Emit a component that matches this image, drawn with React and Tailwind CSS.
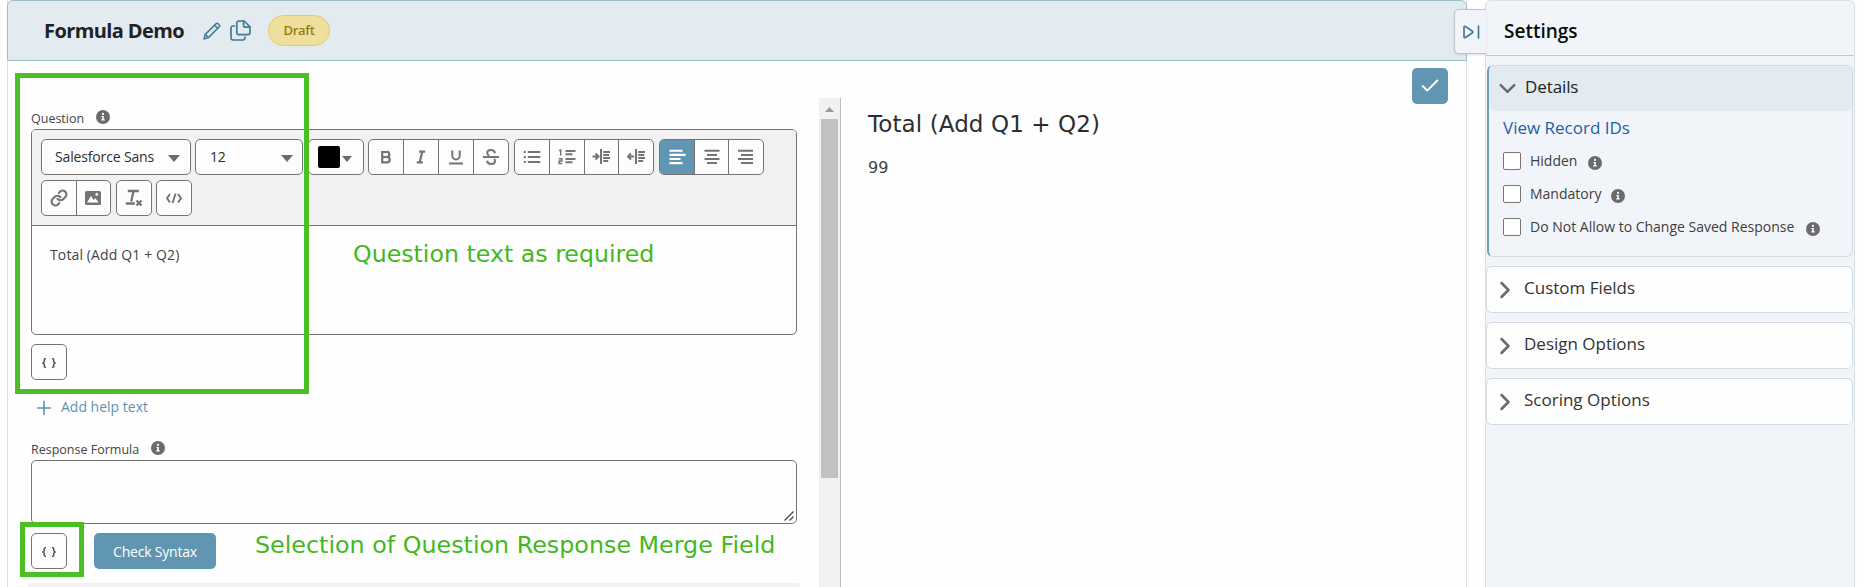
import { Check, ChevronDown, ChevronRight, Link, Plus } from 'lucide-react';

const InfoIcon = ({ className = "" }) => (
    <svg viewBox="0 0 14 14" className={`w-[14px] h-[14px] shrink-0 ${className}`}>
        <circle cx="7" cy="7" r="7" fill="#6b6b6b" />
        <circle cx="7" cy="3.9" r="1.1" fill="#fff" />
        <path d="M5.4 5.9h2.4v3.4h1v1.2H5.2V9.3h1V7.1h-.8z" fill="#fff" />
    </svg>
);

const PencilIcon = () => (
    <svg viewBox="0 0 18 18" className="w-[18px] h-[18px]" fill="none" stroke="#427d93" strokeWidth="1.5" strokeLinejoin="round" strokeLinecap="round">
        <path d="M1 17l1.2-4.6L13.2 1.6c.5-.5 1.2-.5 1.7 0l1.4 1.4c.5.5.5 1.2 0 1.7L5.4 15.6z" />
        <path d="M11.6 3.3l3 3M2.4 12.6l2.8 2.8" />
    </svg>
);

const CopyIcon = () => (
    <svg viewBox="0 0 21 21" className="w-[21px] h-[21px]" fill="none" stroke="#427d93" strokeWidth="1.7" strokeLinejoin="round" strokeLinecap="round">
        <path d="M14.2 1H9C7.6 1 6.8 1.8 6.8 3.1v9.3c0 1.4.8 2.2 2.2 2.2h8.8c1.4 0 2.2-.8 2.2-2.2V6.8z" />
        <path d="M13.6 1.2v4c0 1.3.7 2 2 2h4" />
        <path d="M4.6 6H3.2C1.8 6 1 6.8 1 8.2v9.6C1 19.2 1.8 20 3.2 20h9.6c1.4 0 2.2-.8 2.2-2.2v-.6" />
    </svg>
);

const Caret = ({ className }) => (
    <svg viewBox="0 0 12 8" className={className} fill="#6b6b6b" preserveAspectRatio="none">
        <path d="M0 0h12L6 8z" />
    </svg>
);

// 18x18 toolbar glyphs, drawn in the current text colour
const glyphs = {
    bold: <path d="M5.2 4v10.4h4.6a2.7 2.7 0 0 0 .4-5.4 2.5 2.5 0 0 0-.8-5zM5.2 9h5" strokeWidth="2.2" />,
    italic: <path d="M7.2 3.7h6M4.8 14.3h6M10.3 3.7L7.7 14.3" strokeWidth="2.2" />,
    underline: <path d="M5.3 2.5v5.2a3.7 3.7 0 0 0 7.4 0V2.5M2 15.5h14" strokeWidth="2" />,
    strike: <path d="M1 9h16M13 5.2C12.6 3 11 2 9 2 6.7 2 5.2 3.2 5.2 5c0 1.3.9 2.2 2 2.6M5 12.8C5.4 15 7 16 9 16c2.5 0 4-1.3 4-3.2 0-.8-.3-1.4-.7-1.9" strokeWidth="2" />,
    bullets: <path d="M.8 4h2M.8 9h2M.8 14h2M4.8 4h12.500M4.800 9h12.500M4.800 14h12.500" strokeWidth="1.9" />,
    numbers: (
        <>
            <path d="M7.500 3h10M7.500 6.200h7M7.500 11h10M7.500 14.200h7" strokeWidth="2" />
            <path d="M1 2.600L2.700 2v5.600M.8 10.700h3v2.400H1.200v2.400h3" strokeWidth="1.5" />
        </>
    ),
    indent: <path d="M.5 8.500h5M3.500 5.500l3 3-3 3M9 1v15M11.200 4H18M11.200 7h6M11.200 10H18M11.200 13h5" strokeWidth="2" />,
    outdent: <path d="M1.500 8.500h5.500M4 5.500l-3 3 3 3M9 1v15M11.200 4H18M11.200 7h6M11.200 10H18M11.200 13h5" strokeWidth="2" />,
    left: <path d="M1.500 2.800h13M1.500 6.900h16M1.500 11h11M1.500 15.100h13" strokeWidth="2.1" />,
    center: <path d="M1.500 2.800h15M4 6.900h10M1.500 11h15M4 15.100h10" strokeWidth="2" />,
    right: <path d="M1 2.800h15M4 6.900h12M1 11h15M4 15.100h12" strokeWidth="2" />,
    image: (
        <>
            <rect x="1" y="2" width="16" height="14" rx="1.5" fill="currentColor" stroke="none" />
            <path d="M3 13.5l4-6.500 2.600 4 1.600-2 3.400 4.500z" fill="#fff" stroke="none" />
            <circle cx="12.8" cy="5.4" r="1.4" fill="#fff" stroke="none" />
        </>
    ),
    clear: <path d="M2.800 2h11M8.600 2L6.200 12.500M.8 14.500h9M11.500 11.500l5 5M16.500 11.500l-5 5" strokeWidth="2.3" />,
    code: <path d="M5 5L2 9.200 5 13.400M13 5l3 4.200-3 4.200M10.600 4.500L7.600 14" strokeWidth="1.9" />
};

const Glyph = ({ name }) => (
    <svg viewBox="0 0 18 18" className="w-[18px] h-[18px]" fill="none" stroke="currentColor">
        {glyphs[name]}
    </svg>
);

const ButtonGroup = ({ names, active, className = "" }) => (
    <div className={`flex h-9 border border-[#747474] rounded-[5px] overflow-hidden bg-[#fdfdfd] text-[#747474] ${className}`}>
        {names.map((name, i) => (
            <button
                key={name}
                className={`flex-1 flex items-center justify-center
                ${i > 0 ? "border-l border-[#747474]" : ""}
                ${name === active ? "bg-[#6096b2] text-white" : ""}`}
            >
                {name === "link" ? <Link className="w-[18px] h-[18px]" strokeWidth={2.8} /> : <Glyph name={name} />}
            </button>
        ))}
    </div>
);

const MergeButton = () => (
    <button className="w-9 h-9 shrink-0 rounded-[5px] border border-[#747474] flex items-center justify-center text-[#555]">
        <svg viewBox="0 0 14 10" className="w-[14px] h-[10px] mt-[2px]" fill="none" stroke="currentColor" strokeWidth="1.5">
            <path d="M4 .8H3.200c-.6 0-.9.300-.9.900v2L.9 5l1.400 1.300v2c0 .6.300.9.900.9H4M10 .8h.8c.6 0 .9.300.9.900v2L13.100 5l-1.400 1.300v2c0 .6-.300.9-.9.900H10" />
        </svg>
    </button>
);

const options = [
    { label: "Hidden", gap: "ml-[11px]", shift: "mt-[4px]" },
    { label: "Mandatory", gap: "ml-[10px]", shift: "mt-[4px]" },
    { label: "Do Not Allow to Change Saved Response", gap: "ml-[12px]", shift: "mt-[3px]" }
];

const sections = ["Custom Fields", "Design Options", "Scoring Options"];

export default function App() {
    return (
        <div className="relative w-[1863px] h-[587px] overflow-hidden bg-[#fefefe] pl-[7px] flex gap-[18px] font-['Open_Sans',sans-serif] text-[#2e2e2e]">
            {/* MAIN */}
            <main className="w-[1460px] h-full flex flex-col border-x border-[#dde3e8]">
                <header className="-mx-px h-[61px] shrink-0 flex items-center pl-[36px] bg-[#e3eaf0] border border-[#9abfcb] rounded-t-[6px]">
                    <h1 className="w-[141px] mt-px whitespace-nowrap text-[20px] font-bold tracking-[-0.600px] text-[#1f2326]">Formula Demo</h1>
                    <div className="flex items-center ml-[18px] gap-[9px]">
                        <PencilIcon />
                        <CopyIcon />
                    </div>
                    <span className="ml-[17px] w-[62px] h-[31px] flex items-center justify-center rounded-full border border-[#e9cb62] bg-[#efdf9c] pt-px text-[13px] font-semibold tracking-[-0.300px] text-[#937c10]">
                        Draft
                    </span>
                </header>

                <div className="flex flex-1 min-h-0">
                    {/* EDITOR */}
                    <section className="w-[833px] flex pt-[37px]">
                        <div className="flex-1 pl-[23px] pr-[22px] overflow-hidden">
                            <div className="mt-[11px] h-5 flex items-center text-[12.500px] text-[#444]">
                                Question <InfoIcon className="ml-3 -mt-[5px]" />
                            </div>

                            <div className="h-[206px] rounded-[5px] border border-[#747474] overflow-hidden">
                                <div className="h-[96px] bg-[#f1f1f1] border-b border-[#747474] pl-[9px] pt-[9px]">
                                    <div className="flex">
                                        <div className="w-[150px] h-9 flex items-center justify-between pl-[13px] pr-[10px] rounded-[5px] border border-[#747474] bg-[#fdfdfd] text-[14px] tracking-[-0.150px]">
                                            <span className="-mt-px whitespace-nowrap">Salesforce Sans</span>
                                            <Caret className="w-3 h-[7px] mt-[3px]" />
                                        </div>
                                        <div className="ml-1 w-[108px] h-9 flex items-center justify-between pl-[14px] pr-[9px] rounded-[5px] border border-[#747474] bg-[#fdfdfd] text-[14px] tracking-[-0.300px]">
                                            <span className="-mt-px">12</span>
                                            <Caret className="w-3 h-[7px] mt-[3px]" />
                                        </div>
                                        <div className="ml-[5px] w-[56px] h-9 flex items-center pl-[9px] rounded-[5px] border border-[#747474] bg-[#fdfdfd]">
                                            <span className="w-[22px] h-[22px] rounded-[2px] bg-black" />
                                            <Caret className="w-[10px] h-[6px] ml-[2px] mt-[3px]" />
                                        </div>
                                        <ButtonGroup className="ml-1 w-[141px]" names={["bold", "italic", "underline", "strike"]} />
                                        <ButtonGroup className="ml-[5px] w-[140px]" names={["bullets", "numbers", "indent", "outdent"]} />
                                        <ButtonGroup className="ml-[5px] w-[105px]" names={["left", "center", "right"]} active="left" />
                                    </div>
                                    <div className="flex mt-[5px]">
                                        <ButtonGroup className="w-[70px]" names={["link", "image"]} />
                                        <ButtonGroup className="ml-[5px] w-9" names={["clear"]} />
                                        <ButtonGroup className="ml-1 w-9" names={["code"]} />
                                    </div>
                                </div>
                                <p className="pl-[18px] pt-[19px] text-[14px] leading-5 tracking-[0.130px] text-[#444]">Total (Add Q1 + Q2)</p>
                            </div>

                            <div className="mt-[9px]">
                                <MergeButton />
                            </div>

                            <button className="mt-[16px] ml-[2px] h-5 flex items-center text-[14px] text-[#5c93b3]">
                                <Plus className="w-[22px] h-[22px] mt-[3px] mr-[6px]" strokeWidth={1.8} />
                                Add help text
                            </button>

                            <div className="mt-[24px] h-5 flex items-center text-[12.500px] text-[#444]">
                                Response Formula <InfoIcon className="ml-[12px] -mt-[4px]" />
                            </div>
                            <div className="h-[64px] rounded-[5px] border border-[#747474] flex items-end justify-end p-[2px]">
                                <svg viewBox="0 0 10 10" className="w-[10px] h-[10px]" stroke="#444" strokeWidth="1.3">
                                    <path d="M.5 9.500l9-9M5.500 9.500l4-4" />
                                </svg>
                            </div>

                            <div className="mt-[9px] flex">
                                <MergeButton />
                                <button className="ml-[27px] w-[122px] h-9 rounded-[5px] bg-[#6096b2] text-white text-[14px] font-medium tracking-[-0.200px]">
                                    Check Syntax
                                </button>
                            </div>
                            <div className="mt-[14px] h-3 -mx-[3px] rounded-t bg-[#f1f1f1]" />
                        </div>

                        {/* Scrollbar */}
                        <div className="w-[22px] flex flex-col items-center bg-[#f1f1f1] border-r border-[#bcbcbc]">
                            <svg viewBox="0 0 9 5" className="w-[9px] h-[5px] mt-[9px]" fill="#999">
                                <path d="M0 5h9L4.500 0z" />
                            </svg>
                            <div className="mt-[7px] w-[17px] h-[359px] bg-[#c1c1c1]" />
                        </div>
                    </section>

                    {/* PREVIEW */}
                    <section className="flex-1 flex justify-between pl-[27px] pr-[18px] font-['DejaVu_Sans',sans-serif]">
                        <div>
                            <h2 className="mt-[47px] text-[23px] leading-8 tracking-[0.100px] text-[#2e2e2e]">Total (Add Q1 + Q2)</h2>
                            <p className="mt-[18px] text-[16px] leading-5 text-[#444]">99</p>
                        </div>
                        <button className="mt-[7px] w-9 h-9 rounded-[5px] bg-[#6096b2] flex items-center justify-center text-white">
                            <Check className="w-[22px] h-[22px]" strokeWidth={2.1} />
                        </button>
                    </section>
                </div>
            </main>

            {/* SETTINGS */}
            <aside className="w-[370px] h-full bg-[#f1f5f9] border border-b-0 border-[#d9e0e6] rounded-t-[6px]">
                <h2 className="h-[55px] flex items-center pl-[18px] pt-[6px] border-b border-[#bfc6cf] text-[19px] font-semibold text-[#0c0c0c]">
                    Settings
                </h2>
                <div className="pr-[1px] pt-[9px] flex flex-col gap-[9px]">
                    <div className="ml-px h-[192px] rounded-[6px] border border-[#d3dce3] border-l-2 border-l-[#6d9fb8] overflow-hidden">
                        <div className="h-[45px] flex items-center pl-[5px] bg-[#e3eaf0] rounded-b-[5px]">
                            <ChevronDown className="w-[27px] h-[27px] text-[#6b6b6b]" strokeWidth={2.2} />
                            <span className="ml-[4px] -mt-[3px] text-[17px] tracking-[-0.100px] text-[#222]">Details</span>
                        </div>
                        <div className="pl-[14px]">
                            <a className="mt-[5px] h-6 flex items-center text-[17px] text-[#1b62a8]">View Record IDs</a>
                            <div className="mt-[10px] flex flex-col gap-[11px]">
                                {options.map((o) => (
                                    <label key={o.label} className="h-[22px] flex items-center text-[14px] text-[#3e3e3e]">
                                        <span className="w-[18px] h-[18px] shrink-0 rounded-[2px] border border-[#747474] bg-white" />
                                        <span className="ml-[9px] -mt-px whitespace-nowrap">{o.label}</span>
                                        <InfoIcon className={`${o.gap} ${o.shift}`} />
                                    </label>
                                ))}
                            </div>
                        </div>
                    </div>
                    {sections.map((title) => (
                        <div key={title} className="h-[47px] flex items-center pl-[4px] rounded-[6px] border border-[#d3dce3] bg-[#fefefe]">
                            <ChevronRight className="w-[28px] h-[28px] text-[#6b6b6b]" strokeWidth={2.2} />
                            <span className="ml-[5px] -mt-[3px] text-[17px] text-[#333]">{title}</span>
                        </div>
                    ))}
                </div>
            </aside>

            {/* Collapse tab over the panel edge */}
            <button className="absolute left-[1454px] top-[9px] w-[32px] h-[45px] rounded-l-[5px] border border-r-0 border-[#bcc5cf] bg-[#f1f5f9] shadow-sm flex items-center justify-center">
                <svg viewBox="0 0 17 14" className="w-[17px] h-[14px] mt-[1px] ml-[2px]" fill="none" stroke="#427d93" strokeWidth="1.7" strokeLinejoin="round" strokeLinecap="round">
                    <path d="M1 2.200v9.600c0 .8.8 1.200 1.500.7l7-4.700c.6-.4.6-1.200 0-1.600l-7-4.700C1.800 1 1 1.400 1 2.200zM15.500 1v12" />
                </svg>
            </button>

            {/* Callouts */}
            <div className="absolute left-[15px] top-[73px] w-[294px] h-[321px] border-[5px] border-[#4bbf26]" />
            <div className="absolute left-[20px] top-[522px] w-[64px] h-[55px] border-[5px] border-[#4bbf26]" />
            <p className="absolute left-[353px] top-[238px] whitespace-nowrap leading-8 text-[23.700px] font-['DejaVu_Sans',sans-serif] text-[#44b81f]">
                Question text as required
            </p>
            <p className="absolute left-[255px] top-[529px] whitespace-nowrap leading-8 text-[23.800px] font-['DejaVu_Sans',sans-serif] text-[#44b81f]">
                Selection of Question Response Merge Field
            </p>
        </div>
    );
}
